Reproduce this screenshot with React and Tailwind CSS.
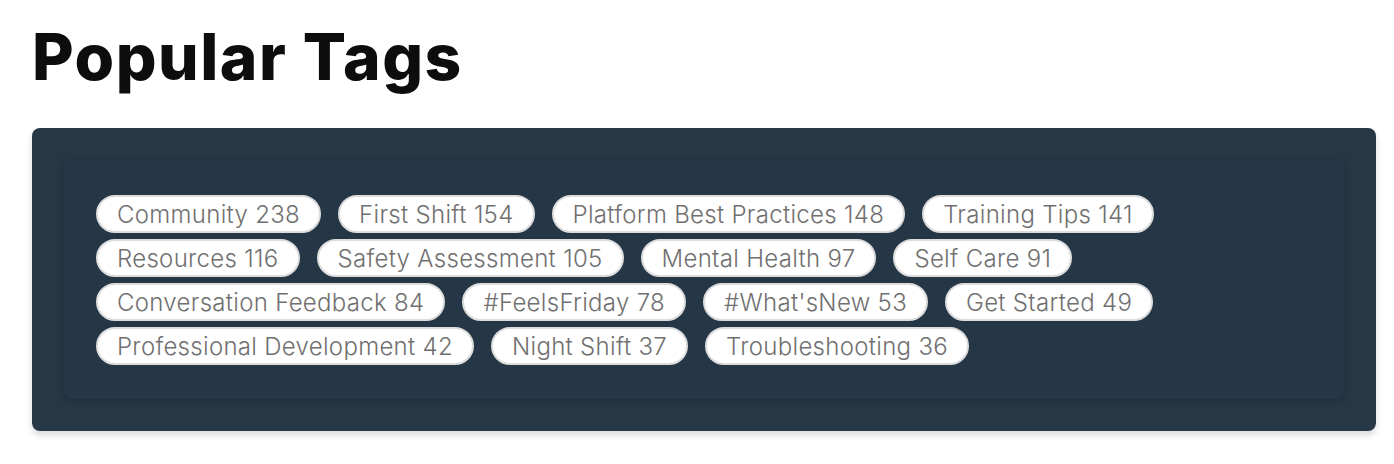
const tags = [
  ["Community", 238],
  ["First Shift", 154],
  ["Platform Best Practices", 148],
  ["Training Tips", 141],
  ["Resources", 116],
  ["Safety Assessment", 105],
  ["Mental Health", 97],
  ["Self Care", 91],
  ["Conversation Feedback", 84],
  ["#FeelsFriday", 78],
  ["#What'sNew", 53],
  ["Get Started", 49],
  ["Professional Development", 42],
  ["Night Shift", 37],
  ["Troubleshooting", 36],
];

function Tag({ name, count }) {
  return (
    <span className="rounded-full border-2 border-[#dcdcdc] bg-white px-[19px] pt-px leading-[33px] text-[24px] tracking-[0.3px] font-light text-[#707070] whitespace-nowrap">
      {name} {count}
    </span>
  );
}

export default function App() {
  return (
    <div className="min-h-[464px] bg-white pl-8 pr-[18px] pt-[12px] font-['Inter','Noto_Sans',sans-serif]">
      <h1 className="text-[64px] font-extrabold leading-[90px] tracking-[1.5px] text-[#0d0d0d]">
        Popular Tags
      </h1>
      <div className="mt-[26px] rounded-lg bg-[#263746] p-8 shadow-[0_4px_6px_rgba(0,0,0,0.15)]">
        <div className="rounded-lg bg-[#253746] px-8 pt-[35px] pb-[34px] shadow-[0_2px_6px_rgba(0,0,0,0.18)]">
          <div className="flex flex-wrap gap-x-[17px] gap-y-[6px]">
            {tags.map(([name, count]) => (
              <Tag key={name} name={name} count={count} />
            ))}
          </div>
        </div>
      </div>
    </div>
  );
}
